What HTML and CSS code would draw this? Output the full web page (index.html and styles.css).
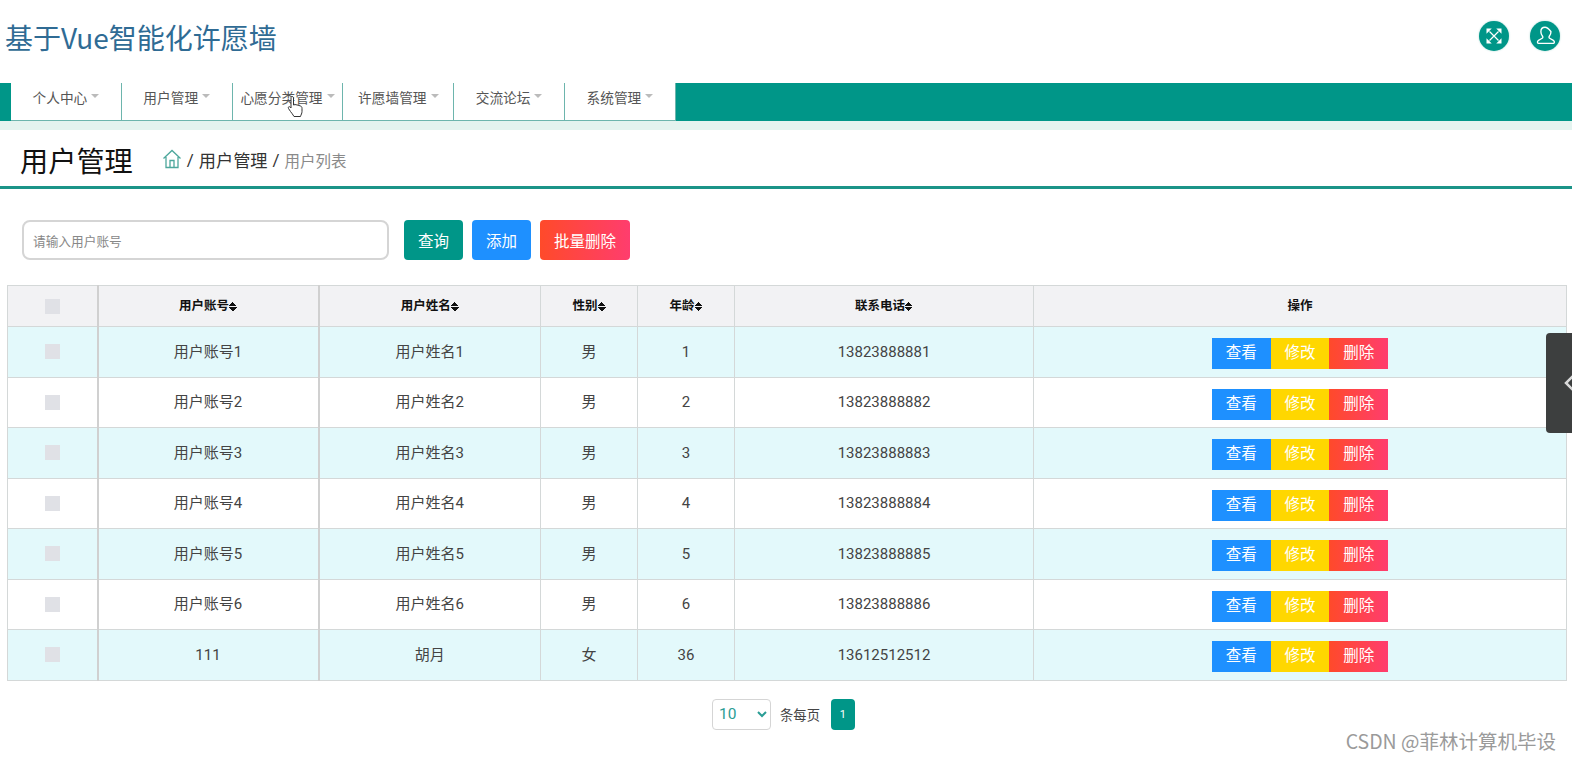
FILE: index.html
```html
<!DOCTYPE html>
<html lang="zh">
<head>
<meta charset="utf-8">
<title>基于Vue智能化许愿墙</title>
<link rel="stylesheet" href="styles.css">
</head>
<body>
<header class="top">
  <h1 class="brand">基于Vue智能化许愿墙</h1>
  <div class="top-icons">
    <span class="round"><svg viewBox="0 0 24 24" width="18" height="18" fill="none" stroke="#fff" stroke-width="1.600"><path d="M6 6l12 12M18 6L6 18"/><path d="M2 2h7L2 9zM22 2h-7l7 7zM22 22h-7l7-7zM2 22h7l-7-7z" fill="#fff" stroke="none"/></svg></span>
    <span class="round"><svg viewBox="0 0 24 24" width="22" height="22" fill="none" stroke="#fff" stroke-width="1.500"><path d="M12 2.500c-3 0-4.500 2.200-4.500 4.800 0 2.300 1 4 1.800 5 .5.600.4 1.700-.3 2.200-1.300.9-4.300 1.300-5 3.200-.4 1.200 0 2.300.8 2.300h16.400c.8 0 1.200-1.100.8-2.300-.7-1.900-3.700-2.300-5-3.200-.7-.5-.8-1.600-.3-2.200.8-1 1.800-2.700 1.800-5C16.500 4.700 15 2.500 12 2.500z"/></svg></span>
  </div>
</header>
<nav class="nav">
  <a class="nav-item">个人中心<i class="caret"></i></a>
  <a class="nav-item">用户管理<i class="caret"></i></a>
  <a class="nav-item">心愿分类管理<i class="caret"></i></a>
  <a class="nav-item">许愿墙管理<i class="caret"></i></a>
  <a class="nav-item">交流论坛<i class="caret"></i></a>
  <a class="nav-item">系统管理<i class="caret"></i></a>
</nav>
<div class="strip"></div>
<section class="crumbs">
  <h2 class="page-title">用户管理</h2>
  <svg class="home" viewBox="0 0 20 20" width="20" height="20" fill="none" stroke="#4da79c" stroke-width="1.300"><path d="M1.500 9.500L10 1.500l8.500 8M4 8v10.500h12V8M8 18.500v-7h4v7"/></svg>
  <span class="sep">/</span><span class="crumb">用户管理</span><span class="sep">/</span><span class="crumb muted">用户列表</span>
</section>
<section class="search">
  <input class="search-input" type="text" placeholder="请输入用户账号">
  <button class="btn teal">查询</button>
  <button class="btn blue">添加</button>
  <button class="btn red wide">批量删除</button>
</section>
<table class="grid">
  <colgroup>
    <col class="c1"><col class="c2"><col class="c5"><col class="c3"><col class="c3"><col class="c4"><col>
  </colgroup>
  <thead>
    <tr>
      <th class="thick"><span class="check"></span></th>
      <th class="thick">用户账号<i class="sort"></i></th>
      <th>用户姓名<i class="sort"></i></th>
      <th>性别<i class="sort"></i></th>
      <th>年龄<i class="sort"></i></th>
      <th>联系电话<i class="sort"></i></th>
      <th>操作</th>
    </tr>
  </thead>
  <tbody>
    <tr class="alt"><td class="thick"><span class="check"></span></td><td class="thick">用户账号1</td><td>用户姓名1</td><td>男</td><td>1</td><td>13823888881</td><td><div class="ops"><a class="op blue">查看</a><a class="op yellow">修改</a><a class="op red">删除</a></div></td></tr>
    <tr><td class="thick"><span class="check"></span></td><td class="thick">用户账号2</td><td>用户姓名2</td><td>男</td><td>2</td><td>13823888882</td><td><div class="ops"><a class="op blue">查看</a><a class="op yellow">修改</a><a class="op red">删除</a></div></td></tr>
    <tr class="alt"><td class="thick"><span class="check"></span></td><td class="thick">用户账号3</td><td>用户姓名3</td><td>男</td><td>3</td><td>13823888883</td><td><div class="ops"><a class="op blue">查看</a><a class="op yellow">修改</a><a class="op red">删除</a></div></td></tr>
    <tr><td class="thick"><span class="check"></span></td><td class="thick">用户账号4</td><td>用户姓名4</td><td>男</td><td>4</td><td>13823888884</td><td><div class="ops"><a class="op blue">查看</a><a class="op yellow">修改</a><a class="op red">删除</a></div></td></tr>
    <tr class="alt"><td class="thick"><span class="check"></span></td><td class="thick">用户账号5</td><td>用户姓名5</td><td>男</td><td>5</td><td>13823888885</td><td><div class="ops"><a class="op blue">查看</a><a class="op yellow">修改</a><a class="op red">删除</a></div></td></tr>
    <tr><td class="thick"><span class="check"></span></td><td class="thick">用户账号6</td><td>用户姓名6</td><td>男</td><td>6</td><td>13823888886</td><td><div class="ops"><a class="op blue">查看</a><a class="op yellow">修改</a><a class="op red">删除</a></div></td></tr>
    <tr class="alt"><td class="thick"><span class="check"></span></td><td class="thick">111</td><td>胡月</td><td>女</td><td>36</td><td>13612512512</td><td><div class="ops"><a class="op blue">查看</a><a class="op yellow">修改</a><a class="op red">删除</a></div></td></tr>
  </tbody>
</table>
<div class="pager">
  <select class="size"><option>10</option></select>
  <span class="per">条每页</span>
  <span class="page">1</span>
</div>
<div class="drawer"><svg viewBox="0 0 12 24" width="12" height="24" fill="none" stroke="#d8d8d8" stroke-width="2.500"><path d="M10 4L2 12l8 8"/></svg></div>
<svg class="cursor" viewBox="0 0 18 24" width="18" height="24" fill="#fff" stroke="#333" stroke-width="1"><path d="M5 1.500c1 0 1.500.7 1.500 1.500v7l1.500-.4 1 .1 1 .3 1 .1 1 .4 1.500.5c1 .4 1.500 1 1.500 2.500v3c0 2-1 3-1.500 5H7c-1-2-2.500-3.500-3.500-5l-2-3c-.6-1 0-2 1-1.800.5.100 1 .6 1.500 1.300V3c0-.8.300-1.500 1-1.500z"/></svg>
<div class="mark">CSDN @菲林计算机毕设</div>
</body>
</html>
```
FILE: styles.css
```css
* { box-sizing: border-box; }
html, body { margin: 0; padding: 0; }
body {
  position: relative;
  height: 760px;
  overflow: hidden;
  background: #fff;
  font-family: "Roboto", "Noto Sans CJK SC", sans-serif;
  color: #333;
}
.top {
  height: 83px;
  display: flex;
  align-items: center;
  justify-content: space-between;
  padding: 0 12px 10px 5px;
}
.brand {
  margin: 0;
  font-family: "Noto Sans CJK SC", sans-serif;
  font-size: 28px;
  font-weight: 400;
  line-height: 40px;
  color: #2f6b94;
}
.top-icons { display: flex; gap: 21px; margin-top: -1px; }
.round {
  width: 30px;
  height: 30px;
  border-radius: 50%;
  background: #009688;
  display: flex;
  align-items: center;
  justify-content: center;
  box-shadow: 0 0 2px #9fd5cf;
}
.nav {
  height: 38px;
  background: #009688;
  padding-left: 11px;
  display: flex;
}
.nav-item {
  width: 110.800px;
  height: 38px;
  background: #fff;
  border-right: 1px solid #6db5ad;
  border-bottom: 1px solid #6db5ad;
  display: flex;
  align-items: center;
  justify-content: center;
  padding-bottom: 9px;
  font-family: "Noto Sans CJK SC", sans-serif;
  font-size: 13.700px;
  color: #555;
  white-space: nowrap;
}
.caret {
  width: 0;
  height: 0;
  margin: -2px 0 0 4px;
  border: 4px solid transparent;
  border-top: 4px solid #bbb;
  border-bottom: 0;
}
.strip { height: 9px; background: #e4f3ef; }
.crumbs {
  height: 59px;
  border-bottom: 3px solid #1b9488;
  display: flex;
  align-items: center;
  padding: 3px 0 0 20px;
  color: #333;
}
.page-title {
  margin: 0 29px 0 0;
  font-family: "Noto Sans CJK SC", sans-serif;
  font-size: 28.200px;
  font-weight: 400;
  color: #111;
}
.home { margin: -1px 5px 0 0; }
.sep { font-size: 17px; margin-right: 5px; }
.crumb { font-size: 17.200px; margin-right: 5px; color: #333; }
.crumb.muted { font-size: 15.500px; color: #8a8a8a; }
.search {
  display: flex;
  align-items: center;
  gap: 9px;
  padding: 31px 0 25px 22px;
}
.search-input {
  width: 367px;
  height: 40px;
  margin-right: 6px;
  padding: 0 9px;
  border: 2px solid #d5d5d5;
  border-radius: 8px;
  font: 12.700px "Noto Sans CJK SC", sans-serif;
  color: #666;
  outline: none;
}
.search-input::placeholder { color: #888; }
.btn {
  width: 59px;
  height: 40px;
  padding: 0;
  border: 0;
  border-radius: 4px;
  color: #fff;
  font: 15.500px "Noto Sans CJK SC", sans-serif;
}
.btn.wide { width: 90px; }
.teal { background: #009688; }
.blue { background: #1e90ff; }
.red { background: linear-gradient(90deg, #ff4a2a, #ff3d6e); }
.yellow { background: #ffd700; }
.grid {
  width: 1560px;
  margin-left: 7px;
  border-collapse: collapse;
  table-layout: fixed;
  font-size: 15px;
  line-height: 20px;
  color: #444;
}
.c1 { width: 90px; }
.c2 { width: 221px; }
.c5 { width: 222px; }
.c3 { width: 97px; }
.c4 { width: 299px; }
.grid th, .grid td {
  border: 1px solid #d4d8d8;
  text-align: center;
  vertical-align: middle;
  padding: 0;
}
.grid th {
  height: 41px;
  background: #f2f2f4;
  font-size: 12.500px;
  font-weight: 700;
  color: #111;
}
.grid td { height: 50.500px; }
.grid .thick { border-right: 2px solid #d0d0d0; }
.alt td { background: #e3f9fb; }
.check {
  display: block;
  width: 15px;
  height: 15px;
  margin: 0 auto;
  background: #e0e1e6;
}
.sort {
  display: inline-block;
  width: 8px;
  height: 9px;
  vertical-align: -1px;
  background:
    linear-gradient(to bottom right, transparent 50%, #111 50%) 0 0 / 4px 4px no-repeat,
    linear-gradient(to bottom left, transparent 50%, #111 50%) 4px 0 / 4px 4px no-repeat,
    linear-gradient(to top right, transparent 50%, #111 50%) 0 5px / 4px 4px no-repeat,
    linear-gradient(to top left, transparent 50%, #111 50%) 4px 5px / 4px 4px no-repeat;
}
.ops { display: flex; justify-content: center; margin-top: 4px; }
.op {
  width: 58.800px;
  height: 31px;
  line-height: 30px;
  color: #fff;
  font-size: 15.500px;
}
.pager {
  display: flex;
  align-items: center;
  justify-content: center;
  margin: 18px 0 0 -5px;
  height: 31px;
}
.size {
  width: 59px;
  height: 31px;
  padding: 0 0 0 2px;
  margin-right: 9px;
  border: 1px solid #d5d5d5;
  border-radius: 4px;
  background: #fff;
  color: #2a9d95;
  font: 15.500px "Roboto", sans-serif;
}
.per { font-size: 13.300px; color: #444; margin-right: 11px; }
.page {
  width: 24px;
  height: 31px;
  line-height: 31px;
  text-align: center;
  border-radius: 4px;
  background: #009688;
  color: #fff;
  font-size: 11px;
}
.drawer {
  position: absolute;
  right: 0;
  top: 333px;
  width: 26px;
  height: 100px;
  padding-left: 18px;
  display: flex;
  align-items: center;
  border-radius: 4px 0 0 4px;
  background: #3d3f3f;
  overflow: hidden;
}
.drawer svg { flex: none; }
.cursor {
  position: absolute;
  left: 287px;
  top: 95px;
}
.mark {
  position: absolute;
  right: 16px;
  top: 726px;
  font-family: "Noto Sans CJK SC", sans-serif;
  font-size: 19.500px;
  color: #9a9a9a;
  white-space: nowrap;
}
```
